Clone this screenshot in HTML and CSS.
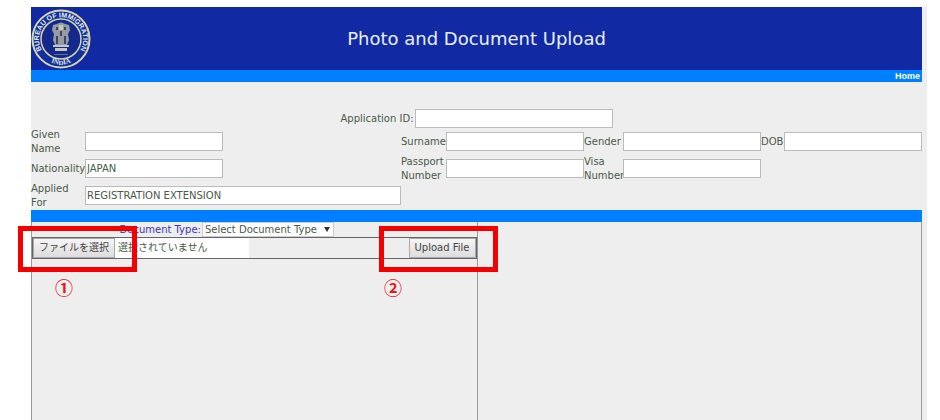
FILE: index.html
```html
<!DOCTYPE html>
<html lang="en">
  <head>
    <meta charset="UTF-8" />
    <meta name="viewport" content="width=device-width, initial-scale=1.0" />
    <title>Photo and Document Upload</title>
    <link rel="stylesheet" href="styles.css">
  </head>
  <body>
    <div class="page">
      <header class="header">
        <svg class="logo" viewBox="0 0 60 60" role="img" aria-label="Bureau of Immigration India">
          <defs>
            <path id="arc-top" d="M12 43A22 22 0 1 1 48 43" />
            <path id="arc-bottom" d="M14 50Q30 61 46 50" />
          </defs>
          <circle cx="30" cy="30" r="28.5" fill="#12309c" stroke="#d5d6a8" stroke-width="2" />
          <circle cx="30" cy="30" r="20" fill="#14298c" stroke="#d5d6a8" stroke-width="1.5" />
          <text class="logo-text"><textPath href="#arc-top" startOffset="50%" text-anchor="middle">BUREAU OF IMMIGRATION</textPath></text>
          <text class="logo-india"><textPath href="#arc-bottom" startOffset="50%" text-anchor="middle">INDIA</textPath></text>
          <!-- lion capital -->
          <path fill="#969ca2" d="M26 15q4-3 8 0l4 1 1 5-2 4 1 6-2 5H24l-2-5 1-6-2-4 1-5z" />
          <path fill="#3c4568" d="M25 18h2v3h-2zM33 18h2v3h-2zM29 22h2v5h-2zM25 27h2v8h-2zM33 27h2v8h-2z" />
          <path fill="#c5c7c0" d="M28 16h4v5h-4zM22 36h16v2H22zM24 39h12v3H24z" />
          <path fill="#6570a0" d="M23 45h14v1H23z" />
        </svg>
        <h1 class="title">Photo and Document Upload</h1>
      </header>
      <nav class="bar"><a class="home-link" href="#">Home</a></nav>

      <form class="form">
        <div class="application-row">
          <label for="application-id">Application ID:</label>
          <input class="field application-field" type="text" id="application-id">
        </div>
        <div class="details">
          <label for="given-name">Given Name</label>
          <input class="field" type="text" id="given-name">
          <label class="second" for="surname">Surname</label>
          <input class="field" type="text" id="surname">
          <label for="gender">Gender</label>
          <input class="field" type="text" id="gender">
          <label for="dob">DOB</label>
          <input class="field" type="text" id="dob">

          <label for="nationality">Nationality</label>
          <input class="field" type="text" id="nationality" value="JAPAN">
          <label class="second" for="passport">Passport Number</label>
          <input class="field" type="text" id="passport">
          <label for="visa">Visa Number</label>
          <input class="field" type="text" id="visa">

          <label class="first" for="applied-for">Applied<br>For</label>
          <input class="field wide" type="text" id="applied-for" value="REGISTRATION EXTENSION">
        </div>
        <div class="bar"></div>

        <div class="panels">
          <section class="panel">
            <div class="type-row">
              <label class="type-label" for="document-type">Document Type:</label>
              <span class="select-wrap">
                <select class="type-select" id="document-type">
                  <option>Select Document Type</option>
                </select>
              </span>
            </div>
            <div class="upload-row">
              <div class="file-picker">
                <input class="file-input" type="file" id="document-file">
                <label class="button" for="document-file">ファイルを選択</label>
                <span class="file-name">選択されていません</span>
              </div>
              <button class="button" type="button">Upload File</button>
            </div>
          </section>
          <section class="panel preview"></section>
        </div>
      </form>
    </div>

    <!-- step markers -->
    <div class="marker marker-choose"><span class="step">①</span></div>
    <div class="marker marker-upload"><span class="step">②</span></div>
  </body>
</html>
```
FILE: styles.css
```css
* { box-sizing: border-box; }
body {
  margin: 0;
  padding: 7px 13px 0 31px;
  min-height: 100vh;
  display: flex;
  background: #fff;
  color: #4a5a48;
  font: 10px/14px "DejaVu Sans", "Noto Sans CJK JP", sans-serif;
}
.page {
  flex: 1;
  display: flex;
  flex-direction: column;
  padding-right: 5px;
  background: #eee;
}
.header {
  display: grid;
  grid-template-columns: 60px 1fr 60px;
  align-items: center;
  height: 63px;
  background: #1129a3;
}
.logo { width: 60px; height: 60px; }
.logo-text { fill: #e6eaf2; font: bold 7px "Liberation Sans", sans-serif; }
.logo-india { fill: #e6eaf2; font: bold 7px "Liberation Serif", serif; }
.title {
  margin: 0;
  color: #e8f0ff;
  font-size: 18px;
  font-weight: normal;
  line-height: 24px;
  text-align: center;
}
.bar {
  height: 12px;
  background: #0080ff;
  text-align: right;
}
.home-link {
  display: block;
  padding-right: 2px;
  color: #fff;
  font: bold 9px/12px "Liberation Sans", sans-serif;
  text-decoration: none;
}

/* Applicant details */
.form {
  flex: 1;
  display: flex;
  flex-direction: column;
}
.application-row {
  display: flex;
  justify-content: center;
  align-items: center;
  gap: 1px;
  padding: 27px 0 0;
}
.field {
  width: 100%;
  height: 19px;
  padding: 0 1px;
  border: 1px solid #bbb;
  background: #fff;
  color: inherit;
  font: inherit;
}
.application-field { width: 198px; }
.details {
  display: grid;
  grid-template-columns: 54px 138px 1fr 45px 138px 39px 138px 23px 138px;
  grid-auto-rows: 27px;
  align-items: center;
  padding-bottom: 1px;
}
.second { grid-column: 4; }
.first { grid-column: 1; }
.wide { grid-column: span 2; }

/* Upload area */
.panels {
  flex: 1;
  display: grid;
  grid-template-columns: 1fr 1fr;
}
.panel {
  border-left: 1px solid #999;
}
.preview { border-right: 1px solid #999; }
.type-row {
  display: flex;
  gap: 1px;
  height: 15px;
}
.type-label {
  width: 38%;
  color: #3a35b5;
  line-height: 16px;
  text-align: right;
}
.select-wrap {
  position: relative;
}
.select-wrap::after {
  content: "";
  position: absolute;
  top: 5px;
  right: 4px;
  border: 3px solid transparent;
  border-top: 5px solid #333;
  border-bottom: 0;
  pointer-events: none;
}
.type-select {
  display: block;
  width: 132px;
  height: 15px;
  padding: 0 2px;
  border: 1px solid #ccc;
  border-radius: 0;
  background: #fff;
  color: inherit;
  font: inherit;
  line-height: 13px;
  appearance: none;
}
.upload-row {
  display: flex;
  justify-content: space-between;
  border: 1px solid #666;
}
.file-picker {
  position: relative;
  display: flex;
  width: 216px;
  background: #fff;
}
.file-input {
  position: absolute;
  width: 1px;
  height: 1px;
  opacity: 0;
}
.button {
  height: 20px;
  padding: 0 5px;
  border: 1px solid #aaa;
  background: linear-gradient(#f5f5f5, #ddd);
  color: #444;
  font: inherit;
  line-height: 18px;
  white-space: nowrap;
}
.file-name {
  padding-left: 3px;
  line-height: 19px;
}

.marker {
  position: absolute;
  top: 226px;
  width: 119px;
  height: 46px;
  border: 5px solid #f40000;
  pointer-events: none;
}
.marker-choose { left: 18px; }
.marker-upload { left: 379px; }
.step {
  position: absolute;
  top: 44px;
  left: 0;
  width: 100%;
  color: #e0181e;
  font: bold 18px/24px "Noto Sans CJK JP", sans-serif;
}
.marker-choose .step { padding-left: 32px; }
```
